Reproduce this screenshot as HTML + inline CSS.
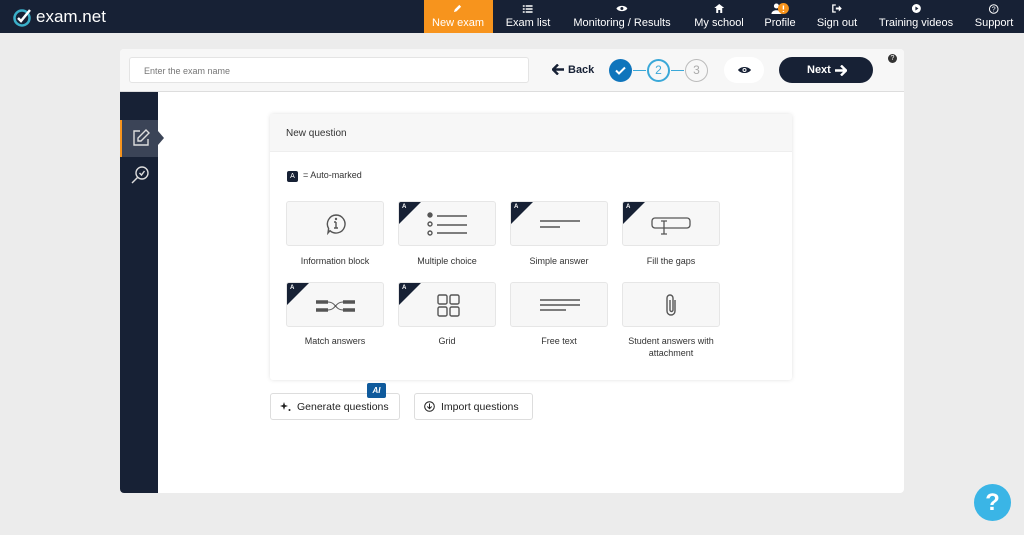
<!DOCTYPE html>
<html><head><style>
*{box-sizing:border-box;margin:0;padding:0}
body{width:1024px;height:535px;background:#ececec;font-family:"Liberation Sans",sans-serif;position:relative;overflow:hidden;color:#222}
.nav{position:absolute;left:0;top:0;width:1024px;height:33px;background:#172135}
.logo{position:absolute;left:12px;top:7px;color:#fff;font-size:17px;display:flex;align-items:center;gap:2px}
.ni{position:absolute;top:0;height:33px;color:#fff;font-size:11px;text-align:center;transform:translateX(-50%);white-space:nowrap}
.ni .ic{display:flex;justify-content:center;align-items:center;height:17px}
.ni .t{display:block;line-height:12px}
.card{position:absolute;left:120px;top:49px;width:784px;height:444px;background:#fff;border-radius:4px;overflow:hidden}
.top{position:absolute;left:0;top:0;width:784px;height:43px;background:#f7f7f7;border-bottom:1px solid #ddd}
.inp{position:absolute;left:9px;top:8px;width:400px;height:26px;background:#fff;border:1px solid #e4e4e4;border-radius:3px;font-size:9px;color:#777;padding:8px 14px}
.side{position:absolute;left:0;top:43px;width:38px;height:401px;background:#172135}
.act{position:absolute;left:0;top:28px;width:38px;height:37px;background:#3b4457;border-left:2px solid #f7941d}
.qp{position:absolute;left:270px;top:114px;width:522px;height:266px;background:#fff;box-shadow:0 0 4px rgba(0,0,0,.12);border-radius:3px}
.qh{height:38px;background:#f7f7f7;font-size:10px;padding:14px 16px;color:#333;border-bottom:1px solid #eee}
.tile{position:absolute;width:98px;height:45px;background:#f7f7f7;border:1px solid #e6e6e6;border-radius:3px;overflow:hidden}
.tri{position:absolute;left:0;top:0;width:0;height:0;border-top:22px solid #172135;border-right:22px solid transparent}
.tri b{position:absolute;left:3px;top:-20px;color:#fff;font-size:6px}
.lbl{position:absolute;width:98px;text-align:center;font-size:9px;color:#333;line-height:12px}
.btn{position:absolute;height:27px;background:#fff;border:1px solid #ddd;border-radius:3px;font-size:10.5px;color:#222;padding:7px 9px;display:flex;align-items:center;gap:6px}
</style></head><body>
<div class="nav">
<div class="logo"><svg width="22" height="20" viewBox="0 0 22 20"><circle cx="10" cy="11" r="7.5" fill="none" stroke="#3bb0c9" stroke-width="2.5"/><path d="M6 11l3 3 9-11" fill="none" stroke="#fff" stroke-width="2.5"/></svg>exam.net</div>
<div style="position:absolute;left:424px;top:0;width:69px;height:33px;background:#f7941d"></div>
<div class="ni" style="left:458px"><span class="ic"><svg width="9" height="9" viewBox="0 0 10 10"><path d="M1 9l1-3 5-5 2 2-5 5z" fill="#fff"/></svg></span><span class="t">New exam</span></div>
<div class="ni" style="left:528px"><span class="ic"><svg width="10" height="8"><path d="M0 1h2M3 1h7M0 4h2M3 4h7M0 7h2M3 7h7" stroke="#fff" stroke-width="1.5"/></svg></span><span class="t">Exam list</span></div>
<div class="ni" style="left:622px"><span class="ic"><svg width="11" height="7" viewBox="0 0 11 7"><path d="M0 3.5C2 0 9 0 11 3.5 9 7 2 7 0 3.5z" fill="#fff"/><circle cx="5.5" cy="3.5" r="1.5" fill="#172135"/></svg></span><span class="t">Monitoring / Results</span></div>
<div class="ni" style="left:719px"><span class="ic"><svg width="10" height="9"><path d="M5 0l5 4H8v5H6V6H4v3H2V4H0z" fill="#fff"/></svg></span><span class="t">My school</span></div>
<div class="ni" style="left:780px"><span class="ic"><svg width="18" height="12"><circle cx="5" cy="3" r="2.5" fill="#fff"/><path d="M0 11c0-5 10-5 10 0z" fill="#fff"/><circle cx="12" cy="5.5" r="5.5" fill="#f7941d"/><path d="M12 2.5v4M12 8v1" stroke="#fff" stroke-width="1.4"/></svg></span><span class="t">Profile</span></div>
<div class="ni" style="left:837px"><span class="ic"><svg width="10" height="9"><path d="M4 1H1v7h3" fill="none" stroke="#fff" stroke-width="1.3"/><path d="M4 3.5h3V1.5l3 3-3 3v-2H4z" fill="#fff"/></svg></span><span class="t">Sign out</span></div>
<div class="ni" style="left:916px"><span class="ic"><svg width="9" height="9"><circle cx="4.5" cy="4.5" r="4.5" fill="#fff"/><path d="M3.5 2.5l3 2-3 2z" fill="#172135"/></svg></span><span class="t">Training videos</span></div>
<div class="ni" style="left:994px"><span class="ic"><svg width="10" height="10"><circle cx="5" cy="5" r="4.3" fill="none" stroke="#fff" stroke-width="1"/><text x="5" y="7.5" font-size="7" fill="#fff" text-anchor="middle" font-family="Liberation Sans">?</text></svg></span><span class="t">Support</span></div>
</div>
<div class="card">
<div class="top">
<div class="inp">Enter the exam name</div>
<svg style="position:absolute;left:432px;top:15px" width="13" height="11" viewBox="0 0 13 11"><path d="M6 0.5L1 5.5l5 5M1.5 5.5H12" fill="none" stroke="#172135" stroke-width="2.4"/></svg>
<div style="position:absolute;left:448px;top:15px;font-size:11px;font-weight:bold;color:#172135">Back</div>
<div style="position:absolute;left:489px;top:10px;width:23px;height:23px;border-radius:50%;background:#0f75bc"><svg style="position:absolute;left:6px;top:7px" width="11" height="9"><path d="M1 4.5l3 3 6-6" fill="none" stroke="#fff" stroke-width="2"/></svg></div>
<div style="position:absolute;left:513px;top:21px;width:13px;border-top:1.5px solid #3aa8d8"></div>
<div style="position:absolute;left:527px;top:10px;width:23px;height:23px;border-radius:50%;border:2px solid #3aa8d8;color:#3aa8d8;font-size:12px;text-align:center;line-height:19px">2</div>
<div style="position:absolute;left:551px;top:21px;width:13px;border-top:1.5px solid #3aa8d8"></div>
<div style="position:absolute;left:565px;top:10px;width:23px;height:23px;border-radius:50%;border:1.5px solid #bbb;color:#aaa;font-size:12px;text-align:center;line-height:20px">3</div>
<div style="position:absolute;left:604px;top:8px;width:40px;height:26px;border-radius:13px;background:#fff"><svg style="position:absolute;left:14px;top:9px" width="13" height="8" viewBox="0 0 13 8"><path d="M0 4C3 0 10 0 13 4 10 8 3 8 0 4z" fill="#172135"/><circle cx="6.5" cy="4" r="2" fill="#fff"/><circle cx="6.5" cy="4" r="1" fill="#172135"/></svg></div>
<div style="position:absolute;left:659px;top:8px;width:94px;height:26px;border-radius:13px;background:#172135;color:#fff;font-size:11px;font-weight:bold;line-height:26px;padding-left:28px">Next<svg style="position:absolute;left:56px;top:8px" width="12" height="11" viewBox="0 0 12 11"><path d="M6 0.5l5 5-5 5M10.5 5.5H0" fill="none" stroke="#fff" stroke-width="2.4"/></svg></div>
<div style="position:absolute;left:768px;top:5px;width:9px;height:9px;border-radius:50%;background:#333;color:#fff;font-size:7px;text-align:center;line-height:9px">?</div>
</div>
<div class="side"><div class="act"><svg style="position:absolute;left:9px;top:8px" width="20" height="20" viewBox="0 0 20 20" fill="none" stroke="#ddd" stroke-width="1.4"><path d="M9 3H3v14h14v-6"/><path d="M15 2l3 3-8 8H7v-3z"/></svg></div>
<div style="position:absolute;left:38px;top:39px;border-left:6px solid #3b4457;border-top:7px solid transparent;border-bottom:7px solid transparent"></div>
<svg style="position:absolute;left:10px;top:73px" width="20" height="20" viewBox="0 0 20 20" fill="none" stroke="#ddd" stroke-width="1.4"><circle cx="12" cy="8" r="6"/><path d="M8 12l-6 6"/><path d="M9.5 8l2 2 3-4"/></svg></div>
</div>
<div class="qp"><div class="qh">New question</div>
<div style="position:absolute;left:17px;top:56px;font-size:9px;color:#333"><span style="display:inline-block;width:11px;height:11px;background:#172135;color:#fff;border-radius:2px;font-size:7px;text-align:center;line-height:11px">A</span> &nbsp;= Auto-marked</div>
</div>
<div class="tile" style="left:286px;top:201px"><svg style="position:absolute;left:38px;top:11px" width="22" height="22" viewBox="0 0 22 22" fill="none" stroke="#555" stroke-width="1.4"><path d="M11 2a9 9 0 1 1-6 15.7L3 20l.6-4.5A9 9 0 0 1 11 2z"/><path d="M11 9v6M9 15h4M9 9h2"/><circle cx="11" cy="6" r=".5"/></svg></div>
<div class="tile" style="left:398px;top:201px"><div class="tri"><b>A</b></div><svg style="position:absolute;left:28px;top:10px" width="42" height="24" fill="none" stroke="#555" stroke-width="1.4"><circle cx="3" cy="3" r="2" fill="#555"/><circle cx="3" cy="12" r="2"/><circle cx="3" cy="21" r="2"/><path d="M10 4h30M10 13h30M10 21h30"/></svg></div>
<div class="tile" style="left:510px;top:201px"><div class="tri"><b>A</b></div><svg style="position:absolute;left:29px;top:17px" width="42" height="12" stroke="#555" stroke-width="1.4"><path d="M0 2h40M0 8h20"/></svg></div>
<div class="tile" style="left:622px;top:201px"><div class="tri"><b>A</b></div><svg style="position:absolute;left:28px;top:14px" width="42" height="22" fill="none" stroke="#555" stroke-width="1.3"><rect x="1" y="2" width="38" height="10" rx="3"/><path d="M13 5v13M10 5h6M10 18h6"/></svg></div>
<div class="tile" style="left:286px;top:282px"><div class="tri"><b>A</b></div><svg style="position:absolute;left:28px;top:13px" width="42" height="20" stroke="#555"><path d="M1 6h12M1 14h12M28 6h12M28 14h12" stroke-width="3.5"/><path d="M13 6c8 0 7 8 15 8M13 14c8 0 7-8 15-8" fill="none" stroke-width="1"/></svg></div>
<div class="tile" style="left:398px;top:282px"><div class="tri"><b>A</b></div><svg style="position:absolute;left:38px;top:11px" width="24" height="24" fill="none" stroke="#555" stroke-width="1.4"><rect x="1" y="1" width="9" height="9" rx="1.5"/><rect x="13" y="1" width="9" height="9" rx="1.5"/><rect x="1" y="13" width="9" height="9" rx="1.5"/><rect x="13" y="13" width="9" height="9" rx="1.5"/></svg></div>
<div class="tile" style="left:510px;top:282px"><svg style="position:absolute;left:29px;top:15px" width="42" height="14" stroke="#555" stroke-width="1.4"><path d="M0 2h40M0 7h40M0 12h26"/></svg></div>
<div class="tile" style="left:622px;top:282px"><svg style="position:absolute;left:40px;top:9px" width="18" height="28" fill="none" stroke="#555" stroke-width="1.4"><path d="M12 8v11a4 4 0 0 1-8 0V6a3 3 0 0 1 6 0v12a1.5 1.5 0 0 1-3 0V8"/></svg></div>
<div class="lbl" style="left:286px;top:255px">Information block</div>
<div class="lbl" style="left:398px;top:255px">Multiple choice</div>
<div class="lbl" style="left:510px;top:255px">Simple answer</div>
<div class="lbl" style="left:622px;top:255px">Fill the gaps</div>
<div class="lbl" style="left:286px;top:335px">Match answers</div>
<div class="lbl" style="left:398px;top:335px">Grid</div>
<div class="lbl" style="left:510px;top:335px">Free text</div>
<div class="lbl" style="left:614px;width:114px;top:335px">Student answers with attachment</div>
<div class="btn" style="left:270px;top:393px;width:130px"><svg width="11" height="11"><path d="M4 1l1 3 3 1-3 1-1 3-1-3-3-1 3-1z" fill="#222"/><circle cx="9.5" cy="9" r="1" fill="#222"/></svg>Generate questions</div>
<div style="position:absolute;left:367px;top:383px;width:19px;height:15px;background:#0f5a9c;color:#fff;font-size:8px;font-weight:bold;font-style:italic;text-align:center;line-height:15px;border-radius:2px">AI</div>
<div class="btn" style="left:414px;top:393px;width:119px"><svg width="11" height="11"><circle cx="5.5" cy="5.5" r="4.8" fill="none" stroke="#222"/><path d="M5.5 2.5v5M3.3 5.5l2.2 2.2 2.2-2.2" fill="none" stroke="#222"/></svg>Import questions</div>
<div style="position:absolute;left:974px;top:484px;width:37px;height:37px;border-radius:50%;background:#3ab5e6;color:#fff;font-size:24px;font-weight:bold;text-align:center;line-height:37px">?</div>
</body></html>
